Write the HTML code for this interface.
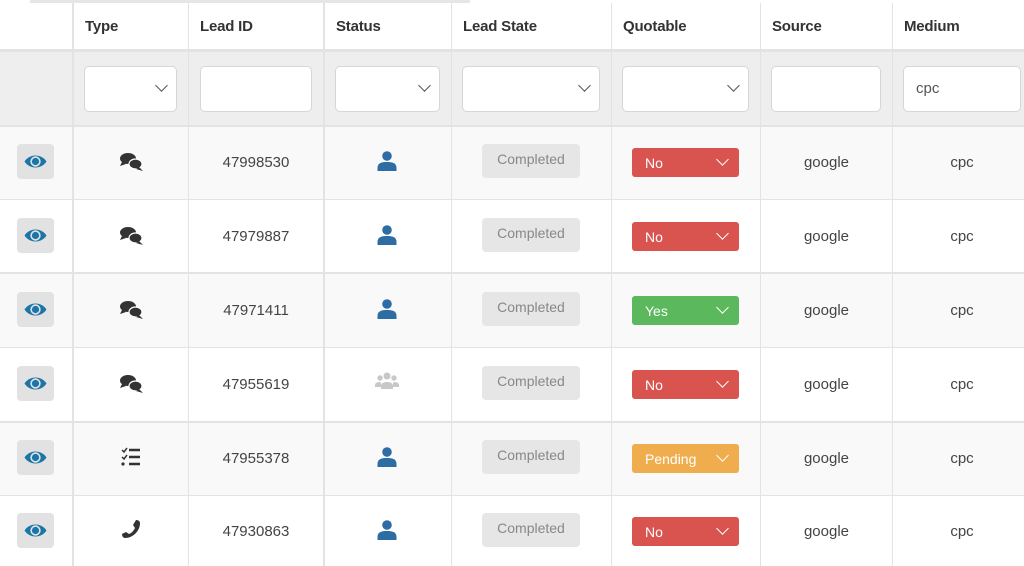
<!DOCTYPE html>
<html><head><style>
body{margin:0;width:1024px;height:566px;overflow:hidden;background:#fff;font-family:"Liberation Sans",sans-serif;position:relative}
.c{position:absolute;box-sizing:border-box}
.vl{position:absolute;top:3px;bottom:0;width:2px;background:#e3e3e3}
.hl{position:absolute;left:0;right:0;background:#e3e3e3}
.th{position:absolute;top:18px;font-weight:bold;font-size:15px;color:#333;letter-spacing:-0.2px}
.inp{position:absolute;top:66px;height:46px;background:#fff;border:1px solid #d6d6d6;border-radius:5px;box-sizing:border-box}
.chev{position:absolute;right:10px;top:14px;width:8px;height:8px;border-right:1.6px solid #555;border-bottom:1.6px solid #555;transform:rotate(45deg)}
.t{position:absolute;font-size:15px;color:#444;text-align:center}
.eye{position:absolute;left:17px;width:37px;height:35px;background:#e2e2e2;border-radius:4px}
.comp{position:absolute;left:482px;width:98px;height:34px;background:#e6e6e6;border-radius:4px;color:#888;font-size:14px;text-align:center;line-height:31px}
.q{position:absolute;left:632px;width:107px;height:29px;border-radius:3px;color:#fff;font-size:14px;line-height:30px;padding-left:13px;box-sizing:border-box}
.q .chev{border-color:#fff;top:7px;right:12px}
</style></head><body>
<div class="c" style="left:30px;top:0;width:440px;height:3px;background:#e6e6e6"></div>
<div class="c" style="left:0;top:52px;width:1024px;height:73px;background:#eee"></div>
<div class="c" style="left:0;top:127px;width:1024px;height:72px;background:#f9f9f9"></div>
<div class="c" style="left:0;top:274px;width:1024px;height:73px;background:#f9f9f9"></div>
<div class="c" style="left:0;top:423px;width:1024px;height:72px;background:#f9f9f9"></div>
<div class="hl" style="top:49px;height:3px"></div>
<div class="hl" style="top:125px;height:2px"></div>
<div class="hl" style="top:199px;height:1px"></div>
<div class="hl" style="top:272px;height:2px"></div>
<div class="hl" style="top:347px;height:1px"></div>
<div class="hl" style="top:421px;height:2px"></div>
<div class="hl" style="top:495px;height:1px"></div>
<div class="vl" style="left:72px"></div><div class="vl" style="left:188px;width:1px"></div><div class="vl" style="left:323px"></div><div class="vl" style="left:451px;width:1px"></div><div class="vl" style="left:611px;width:1px"></div><div class="vl" style="left:760px;width:1px"></div><div class="vl" style="left:892px;width:1px"></div>
<div class="th" style="left:85px">Type</div><div class="th" style="left:200px">Lead ID</div><div class="th" style="left:336px">Status</div><div class="th" style="left:463px">Lead State</div><div class="th" style="left:623px">Quotable</div><div class="th" style="left:772px">Source</div><div class="th" style="left:904px">Medium</div>
<div class="inp" style="left:84px;width:93px"><div class="chev"></div></div>
<div class="inp" style="left:200px;width:112px"></div>
<div class="inp" style="left:335px;width:105px"><div class="chev"></div></div>
<div class="inp" style="left:462px;width:138px"><div class="chev"></div></div>
<div class="inp" style="left:622px;width:127px"><div class="chev"></div></div>
<div class="inp" style="left:771px;width:110px"></div>
<div class="inp" style="left:903px;width:118px;font-size:15px;color:#555;padding:13px 0 0 12px">cpc</div>

<svg width="0" height="0" style="position:absolute"><defs>
<g id="eye"><path d="M-11 0C-6-8 6-8 11 0C6 8-6 8-11 0Z" fill="#1b75a8"/><circle r="5.2" fill="#e2e2e2"/><circle r="3.6" fill="#1b75a8"/></g>
<g id="chat"><ellipse cx="-3" cy="-2.5" rx="8" ry="5.5" fill="#333"/><path d="M-9 1l-2 4 6-2z" fill="#333"/><ellipse cx="4.5" cy="3" rx="6.5" ry="5" fill="#333" stroke="#fff" stroke-width="1.2"/><path d="M8 6l4 4-7-2z" fill="#333"/></g>
<g id="user"><circle cy="-5" r="4.8" fill="#2e6da4"/><path d="M-9.5 10v-3c0-5 4-6 9.5-6s9.5 1 9.5 6v3z" fill="#2e6da4"/></g>
</defs></svg>

<div id="rows"></div>
<script>
var ys=[162,236,310,384,458,531];
var ids=["47998530","47979887","47971411","47955619","47955378","47930863"];
var q=[["No","#d9534f"],["No","#d9534f"],["Yes","#5cb85c"],["No","#d9534f"],["Pending","#f0ad4e"],["No","#d9534f"]];
var h="";
for(var i=0;i<6;i++){var y=ys[i];
h+='<div class="eye" style="top:'+(y-18)+'px"><svg width="37" height="35"><use href="#eye" x="18.5" y="17.5"/></svg></div>';
var typ=i<4?'<use href="#chat" x="13" y="13"/>':(i==4?'<path d="M4 6l2 2 3-4M4 13l2 2 3-4" stroke="#333" stroke-width="1.5" fill="none"/><circle cx="5" cy="20" r="1.6" fill="#333"/><path d="M11 6h11M11 13h11M11 20h11" stroke="#333" stroke-width="2.5"/>':'<path d="M18 3c2 0 4 1 4 3 0 8-7 15-15 15-2 0-3-2-3-4l4-2 3 2c3-1 5-4 6-6l-2-3z" fill="#333"/>');
h+='<svg class="c" style="left:118px;top:'+(y-14)+'px" width="26" height="26">'+typ+'</svg>';
h+='<div class="t" style="left:188px;width:136px;top:'+(y-8)+'px">'+ids[i]+'</div>';
var st=i==3?'<g fill="#c8c8c8"><circle cx="13" cy="6" r="3.5"/><circle cx="6" cy="8" r="2.7"/><circle cx="20" cy="8" r="2.7"/><path d="M7 19v-3c0-3 3-4 6-4s6 1 6 4v3z"/><path d="M1 17v-2c0-2 2-3 5-3l1 1v4z"/><path d="M25 17v-2c0-2-2-3-5-3l-1 1v4z"/></g>':'<use href="#user" x="13" y="13"/>';
h+='<svg class="c" style="left:374px;top:'+(y-14)+'px" width="26" height="26">'+st+'</svg>';
h+='<div class="comp" style="top:'+(y-18)+'px">Completed</div>';
h+='<div class="q" style="top:'+(y-14)+'px;background:'+q[i][1]+'">'+q[i][0]+'<div class="chev"></div></div>';
h+='<div class="t" style="left:761px;width:131px;top:'+(y-8)+'px">google</div>';
h+='<div class="t" style="left:893px;width:138px;top:'+(y-8)+'px">cpc</div>';
}
document.getElementById("rows").innerHTML=h;
</script>
</body></html>
